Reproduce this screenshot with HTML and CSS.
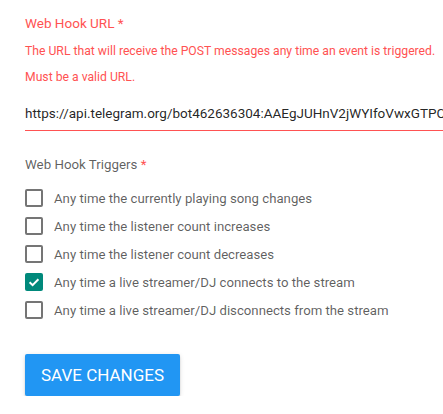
FILE: index.html
```html
<!DOCTYPE html>
<html lang="en">
<head>
    <meta charset="UTF-8">
    <meta name="viewport" content="width=device-width, initial-scale=1.0">
    <title>Web Hook Settings</title>
    <link rel="stylesheet" href="styles.css">
</head>
<body>
    <form class="webhook-form">
        <!-- URL field (error state) -->
        <div class="field field-error">
            <label class="field-label" for="webhook-url">Web Hook URL *</label>
            <div class="field-hints">
                <div class="field-hint">The URL that will receive the POST messages any time an event is triggered.</div>
                <div class="field-hint">Must be a valid URL.</div>
            </div>
            <input id="webhook-url" class="field-input" type="text" value="https://api.telegram.org/bot462636304:AAEgJUHnV2jWYIfoVwxGTPCvGkzZ8mLqR0s/sendMessage">
        </div>

        <!-- Trigger checkboxes -->
        <div class="triggers">
            <div class="triggers-label">Web Hook Triggers <span class="required">*</span></div>
            <label class="check-row"><span class="check-box"></span>Any time the currently playing song changes</label>
            <label class="check-row"><span class="check-box"></span>Any time the listener count increases</label>
            <label class="check-row"><span class="check-box"></span>Any time the listener count decreases</label>
            <label class="check-row"><span class="check-box checked"><svg viewBox="0 0 18 18" width="18" height="18"><path d="M4.6 9.2l3 2.9 5.8-5.8" fill="none" stroke="#fff" stroke-width="2"/></svg></span>Any time a live streamer/DJ connects to the stream</label>
            <label class="check-row"><span class="check-box"></span>Any time a live streamer/DJ disconnects from the stream</label>
        </div>

        <button type="button" class="save-btn">Save Changes</button>
    </form>
</body>
</html>
```

FILE: styles.css
```css
body {
    margin: 0;
    font-family: Roboto, "Liberation Sans", sans-serif;
    background: #fff;
    color: rgba(0, 0, 0, 0.87);
    overflow: hidden;
}
.webhook-form {
    padding: 13px 0 0 25px;
}
.field-label {
    display: block;
    font-size: 13.5px;
    line-height: 20px;
}
.field-hints {
    margin-top: 5px;
}
.field-hint {
    font-size: 12.2px;
    line-height: 26px;
}
.field-error .field-label,
.field-error .field-hint {
    color: #ff5252;
}
.field-input {
    display: block;
    box-sizing: border-box;
    width: 418px;
    margin-top: 13px;
    padding: 0 0 7px;
    border: none;
    border-bottom: 1px solid #ff5252;
    font-family: inherit;
    font-size: 13.5px;
    line-height: 20px;
    color: rgba(0, 0, 0, 0.87);
    outline: none;
}
.triggers {
    margin-top: 24px;
}
.triggers-label {
    font-size: 13.3px;
    line-height: 20px;
    color: rgba(0, 0, 0, 0.64);
    margin-bottom: 9px;
}
.required {
    color: #ff5252;
}
.check-row {
    display: flex;
    align-items: center;
    height: 28px;
    font-size: 13.2px;
    color: rgba(0, 0, 0, 0.64);
}
.check-box {
    box-sizing: border-box;
    width: 18px;
    height: 18px;
    margin-right: 11px;
    border: 2px solid #757575;
    border-radius: 2px;
    flex-shrink: 0;
}
.check-box.checked {
    border: none;
    background: #00897b;
}
.check-box svg {
    display: block;
}
.save-btn {
    margin-top: 30px;
    height: 42px;
    padding: 0 16px;
    background: #2196f3;
    color: #fff;
    border: none;
    border-radius: 2px;
    font-family: inherit;
    font-size: 17px;
    text-transform: uppercase;
    box-shadow: 0 3px 1px -2px rgba(0, 0, 0, 0.2), 0 2px 2px 0 rgba(0, 0, 0, 0.14), 0 1px 5px 0 rgba(0, 0, 0, 0.12);
}
```
